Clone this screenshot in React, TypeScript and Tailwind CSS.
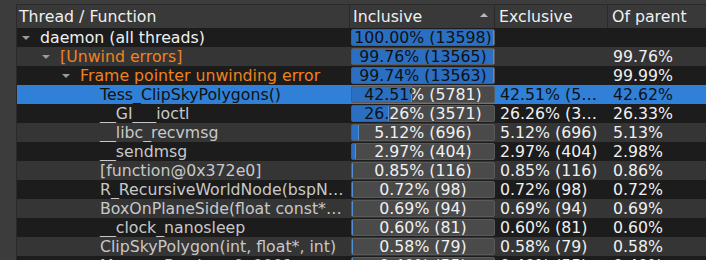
import React from 'react';

interface Row {
  name: string;
  level: number;
  arrow?: boolean;
  tone: 'normal' | 'orange' | 'leaf';
  pct: number;
  incl: string;
  excl: string;
  parent: string;
  selected?: boolean;
}

const rows: Row[] = [
  { name: 'daemon (all threads)', level: 0, arrow: true, tone: 'normal', pct: 100, incl: '100.00% (13598)', excl: '', parent: '' },
  { name: '[Unwind errors]', level: 1, arrow: true, tone: 'orange', pct: 99.76, incl: '99.76% (13565)', excl: '', parent: '99.76%' },
  { name: 'Frame pointer unwinding error', level: 2, arrow: true, tone: 'orange', pct: 99.74, incl: '99.74% (13563)', excl: '', parent: '99.99%' },
  { name: 'Tess_ClipSkyPolygons()', level: 3, tone: 'leaf', pct: 42.51, incl: '42.51% (5781)', excl: '42.51% (5…', parent: '42.62%', selected: true },
  { name: '__GI___ioctl', level: 3, tone: 'leaf', pct: 26.26, incl: '26.26% (3571)', excl: '26.26% (3…', parent: '26.33%' },
  { name: '__libc_recvmsg', level: 3, tone: 'leaf', pct: 5.12, incl: '5.12% (696)', excl: '5.12% (696)', parent: '5.13%' },
  { name: '__sendmsg', level: 3, tone: 'leaf', pct: 2.97, incl: '2.97% (404)', excl: '2.97% (404)', parent: '2.98%' },
  { name: '[function@0x372e0]', level: 3, tone: 'leaf', pct: 0.85, incl: '0.85% (116)', excl: '0.85% (116)', parent: '0.86%' },
  { name: 'R_RecursiveWorldNode(bspN…', level: 3, tone: 'leaf', pct: 0.72, incl: '0.72% (98)', excl: '0.72% (98)', parent: '0.72%' },
  { name: 'BoxOnPlaneSide(float const*…', level: 3, tone: 'leaf', pct: 0.69, incl: '0.69% (94)', excl: '0.69% (94)', parent: '0.69%' },
  { name: '__clock_nanosleep', level: 3, tone: 'leaf', pct: 0.6, incl: '0.60% (81)', excl: '0.60% (81)', parent: '0.60%' },
  { name: 'ClipSkyPolygon(int, float*, int)', level: 3, tone: 'leaf', pct: 0.58, incl: '0.58% (79)', excl: '0.58% (79)', parent: '0.58%' },
  { name: 'MemoryBarrier@0x0001', level: 3, tone: 'leaf', pct: 0.4, incl: '0.40% (55)', excl: '0.40% (55)', parent: '0.40%' },
];

function CostBar({ pct, text }: { pct: number; text: string }) {
  const clip = { clipPath: `inset(0 ${100 - pct}% 0 0)` };
  return (
    <div className="relative h-[17px] w-[144px] rounded-[2px] border border-[#5a5a5a] bg-[#4a4a4a] overflow-hidden">
      <div className="absolute inset-0 flex items-center justify-center text-[#eff0f1]">{text}</div>
      <div
        className="absolute left-0 top-0 bottom-0 bg-[#2b6fc2] border-r border-[#4f8fd6]"
        style={{ width: `max(${pct}%, 1px)` }}
      />
      <div className="absolute inset-0 flex items-center justify-center text-[#111111]" style={clip}>
        {text}
      </div>
    </div>
  );
}

export default function App() {
  return (
    <div
      className="w-[706px] h-[260px] overflow-hidden bg-[#3c3c3c] flex text-[15.75px] leading-[19px]"
      style={{ fontFamily: '"DejaVu Sans", sans-serif' }}
    >
      <div className="w-4 shrink-0" />
      <div className="flex-1 pt-1 min-w-0">
        <div className="border-l border-t border-[#2a2a2a] h-full">
          <div className="flex h-[23px] bg-[#393939] text-[#eff0f1] items-center">
            <div className="w-[333px] h-full flex items-center pl-[2px] border-r border-[#2a2a2a]">Thread / Function</div>
            <div className="w-[145px] h-full flex items-center pl-[3px] pr-[6px] border-r border-[#2a2a2a]">
              <span className="flex-1">Inclusive</span>
              <svg width="8" height="4" viewBox="0 0 8 4" className="mb-[3px]">
                <path d="M0 4 L4 0 L8 4 Z" fill="#b8b8b8" />
              </svg>
            </div>
            <div className="w-[113px] h-full flex items-center pl-[4px] border-r border-[#2a2a2a]">Exclusive</div>
            <div className="flex-1 h-full flex items-center pl-[4px]">Of parent</div>
          </div>
          {rows.map((r, i) => {
            const bg = r.selected ? 'bg-[#2f80d6]' : i % 2 === 0 ? 'bg-[#1c1c1c]' : 'bg-[#353535]';
            const nameColor = r.selected
              ? 'text-[#111111]'
              : r.tone === 'orange'
              ? 'text-[#f0821e]'
              : r.tone === 'leaf'
              ? 'text-[#c8c8c8]'
              : 'text-[#eff0f1]';
            const numColor = r.selected ? 'text-[#111111]' : 'text-[#eff0f1]';
            return (
              <div key={i} className={`flex h-[19px] ${bg}`}>
                <div className="w-[333px] flex items-center whitespace-nowrap overflow-hidden">
                  <div style={{ width: r.level * 20 }} className="shrink-0" />
                  <div className="w-[23px] shrink-0 flex pl-[5px]">
                    {r.arrow && (
                      <svg width="8" height="4" viewBox="0 0 8 4">
                        <path d="M0 0 L8 0 L4 4 Z" fill="#9a9a9a" />
                      </svg>
                    )}
                  </div>
                  <span className={nameColor}>{r.name}</span>
                </div>
                <div className="w-[146px] flex items-center pl-[1px]">
                  <CostBar pct={r.pct} text={r.incl} />
                </div>
                <div className={`w-[113px] flex items-center pl-[4px] whitespace-nowrap overflow-hidden ${numColor}`}>{r.excl}</div>
                <div className={`flex-1 flex items-center pl-[4px] whitespace-nowrap ${numColor}`}>{r.parent}</div>
              </div>
            );
          })}
        </div>
      </div>
    </div>
  );
}
